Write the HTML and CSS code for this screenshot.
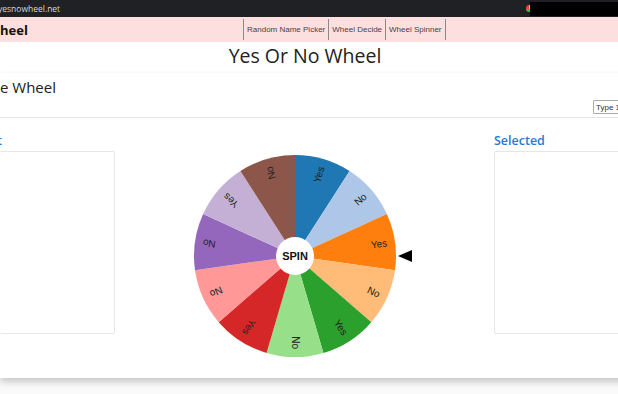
FILE: index.html
```html
<!DOCTYPE html>
<html lang="en">
<head>
    <meta charset="UTF-8">
    <meta name="viewport" content="width=device-width, initial-scale=1.0">
    <title>Yes Or No Wheel</title>
    <link rel="stylesheet" href="styles.css">
</head>
<body>
    <div class="chrome">
        <span class="url">yesnowheel.net</span>
        <span class="profile"></span>
        <span class="blackout"></span>
    </div>
    <nav class="navbar">
        <span class="brand">heel</span>
        <ul class="nav-links">
            <li>Random Name Picker</li>
            <li>Wheel Decide</li>
            <li>Wheel Spinner</li>
        </ul>
    </nav>
    <h1 class="page-title">Yes Or No Wheel</h1>
    <section class="card">
        <div class="card-header">
            <h2>e Wheel</h2>
            <div class="toolbar">
                <select class="type-select">
                    <option>Type 1</option>
                    <option>Type 2</option>
                </select>
            </div>
        </div>
        <div class="card-body">
            <div class="panel">
                <h3 class="panel-title">t</h3>
                <div class="panel-box"></div>
            </div>
            <div class="wheel-wrap">
                <svg id="wheel" width="225" height="206" viewBox="0 0 225 206"></svg>
            </div>
            <div class="panel">
                <h3 class="panel-title">Selected</h3>
                <div class="panel-box"></div>
            </div>
        </div>
    </section>
    <div class="page-foot"></div>
    <script>
        // same order and colours as the d3 category20 scheme
        const items = [
            { label: "Yes", color: "#1f77b4" },
            { label: "No", color: "#aec7e8" },
            { label: "Yes", color: "#ff7f0e" },
            { label: "No", color: "#ffbb78" },
            { label: "Yes", color: "#2ca02c" },
            { label: "No", color: "#98df8a" },
            { label: "Yes", color: "#d62728" },
            { label: "No", color: "#ff9896" },
            { label: "No", color: "#9467bd" },
            { label: "Yes", color: "#c5b0d5" },
            { label: "No", color: "#8c564b" }
        ];

        function drawWheel() {
            const svg = document.getElementById("wheel");
            const cx = 103, cy = 103, r = 101;
            const step = 360 / items.length;
            let html = "";

            const point = deg => {
                const a = deg * Math.PI / 180;
                return [cx + r * Math.sin(a), cy - r * Math.cos(a)];
            };

            items.forEach((item, i) => {
                const [x0, y0] = point(i * step);
                const [x1, y1] = point((i + 1) * step);
                const mid = i * step + step / 2;
                html += `<path d="M${cx} ${cy} L${x0.toFixed(2)} ${y0.toFixed(2)} A${r} ${r} 0 0 1 ${x1.toFixed(2)} ${y1.toFixed(2)} Z" fill="${item.color}"/>`;
                html += `<text class="slice-label" transform="translate(${cx} ${cy}) rotate(${(mid - 90).toFixed(2)})" x="${r - 8}" y="0">${item.label}</text>`;
            });

            html += `<circle cx="${cx}" cy="${cy}" r="19" fill="#fff"/>`;
            html += `<text class="spin-label" x="${cx}" y="${cy}">SPIN</text>`;
            html += `<path d="M${cx + r + 2} ${cy} L${cx + r + 16} ${cy - 6} L${cx + r + 16} ${cy + 6} Z" fill="#000"/>`;
            svg.innerHTML = html;
        }

        drawWheel();
    </script>
</body>
</html>
```

FILE: styles.css
```css
html {
    overflow: hidden;
}
body {
    margin: 0;
    font-family: "Open Sans", "Liberation Sans", sans-serif;
    color: #212121;
    background: #fff;
}
.chrome {
    height: 17px;
    background: #202124;
    display: flex;
    align-items: center;
    position: relative;
}
.url {
    font-size: 8.5px;
    color: #d6d6d6;
    margin-left: -2px;
}
.profile {
    position: absolute;
    left: 526px;
    top: 5px;
    width: 6px;
    height: 7px;
    border-radius: 50%;
    background: conic-gradient(#e8c23a 0 33%, #4caf50 0 66%, #ea4335 0);
}
.blackout {
    position: absolute;
    left: 530px;
    top: 2px;
    right: 0;
    bottom: 1px;
    background: #000;
}
.navbar {
    height: 25px;
    background: #fddfdf;
    display: flex;
    align-items: center;
}
.brand {
    font-weight: bold;
    font-size: 13px;
    color: #111;
    width: 243px;
}
.nav-links {
    list-style: none;
    margin: 0;
    padding: 0;
    display: flex;
    height: 21px;
    border-left: 1px solid #8a8a8a;
}
.nav-links li {
    font-family: "Liberation Sans", Arial, sans-serif;
    font-size: 8px;
    color: #444;
    padding: 0 3px;
    display: flex;
    align-items: center;
    border-right: 1px solid #8a8a8a;
}
.page-title {
    margin: 0;
    padding-right: 8px;
    text-align: center;
    font-weight: normal;
    font-size: 19.5px;
    line-height: 27px;
}
.card {
    margin-right: -25px;
    margin-top: 4px;
    background: #fff;
    position: relative;
    box-shadow: 0 4px 7px rgba(0, 0, 0, 0.2);
}
.page-foot {
    height: 20px;
    background: #fafafa;
}
.card-header {
    padding: 4px 0 3px;
    border-bottom: 1px solid #e4e4e4;
}
.card-header h2 {
    margin: 0;
    font-weight: normal;
    font-size: 15px;
    line-height: 20px;
}
.toolbar {
    display: flex;
    justify-content: flex-end;
    margin-top: 3px;
}
.type-select {
    appearance: none;
    width: 50px;
    height: 14px;
    font-family: "Liberation Sans", Arial, sans-serif;
    font-size: 8px;
    padding: 0 0 0 2px;
    border: 1px solid #aaa;
    border-radius: 1px;
    background: #fff;
    color: #333;
}
.card-body {
    display: grid;
    grid-template-columns: 115px 1fr 149px;
    align-items: start;
    padding: 15px 0 19px;
}
.panel-title {
    margin: 0 0 2px;
    font-size: 12.5px;
    line-height: 16px;
    font-weight: 600;
    color: #2a78d6;
}
.panel:first-child .panel-title {
    margin-left: -3px;
}
.panel-box {
    height: 181px;
    border: 1px solid #e6e6e6;
    border-radius: 2px;
}
.panel:first-child .panel-box {
    border-left: none;
}
.wheel-wrap {
    padding: 20px 0 0 77px;
}
#wheel {
    display: block;
}
.slice-label {
    font-family: "Liberation Sans", Arial, sans-serif;
    font-size: 10px;
    fill: #222;
    text-anchor: end;
    dominant-baseline: central;
}
.spin-label {
    font-family: "Liberation Sans", Arial, sans-serif;
    font-size: 11px;
    font-weight: bold;
    fill: #111;
    text-anchor: middle;
    dominant-baseline: central;
}
```
